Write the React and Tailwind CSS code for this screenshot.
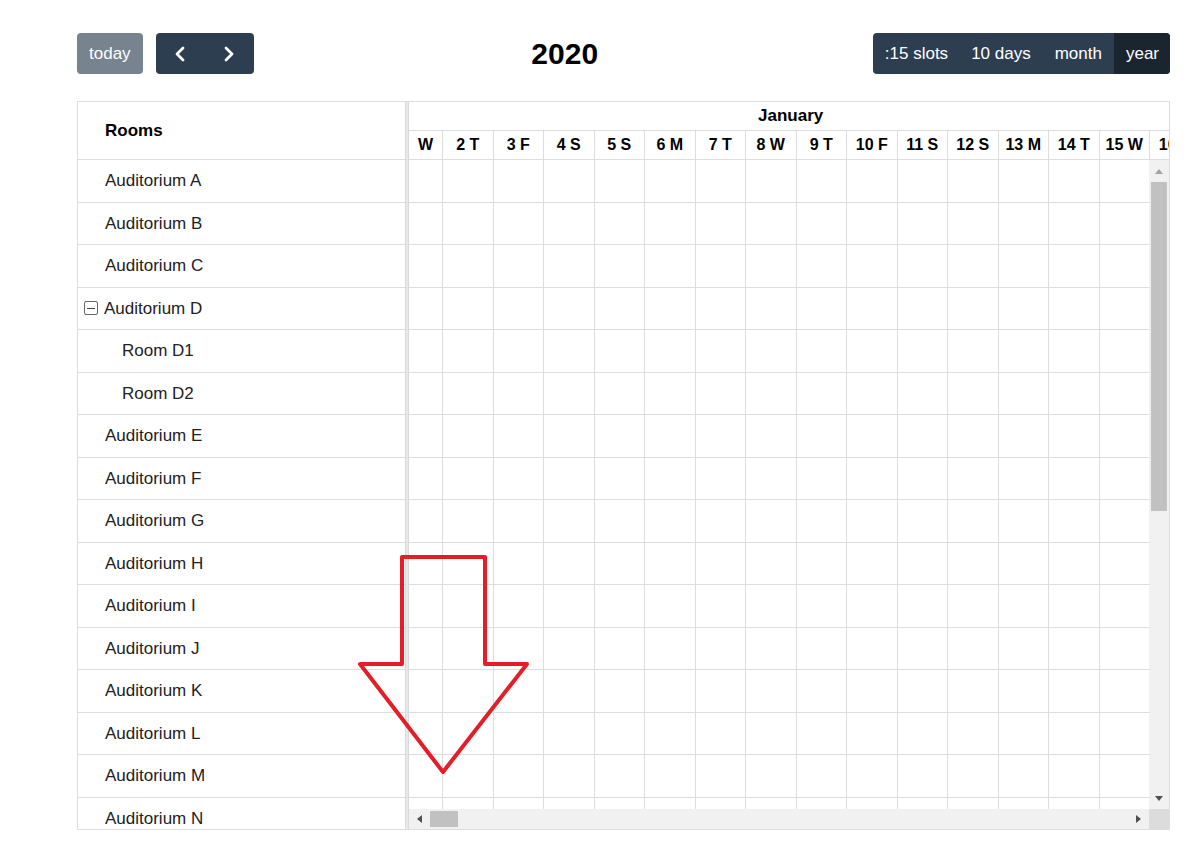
import { ChevronLeft, ChevronRight } from "lucide-react";

const rooms = [
  { name: "Auditorium A" },
  { name: "Auditorium B" },
  { name: "Auditorium C" },
  { name: "Auditorium D", toggle: true },
  { name: "Room D1", child: true },
  { name: "Room D2", child: true },
  { name: "Auditorium E" },
  { name: "Auditorium F" },
  { name: "Auditorium G" },
  { name: "Auditorium H" },
  { name: "Auditorium I" },
  { name: "Auditorium J" },
  { name: "Auditorium K" },
  { name: "Auditorium L" },
  { name: "Auditorium M" },
  { name: "Auditorium N" },
];

const days = ["1 W", "2 T", "3 F", "4 S", "5 S", "6 M", "7 T", "8 W", "9 T", "10 F", "11 S", "12 S", "13 M", "14 T", "15 W", "16 T", "17 F"];

function Toolbar() {
  return (
    <div className="flex items-center justify-between h-[41px]">
      <div className="flex items-center gap-[13px]">
        <button className="h-[41px] px-3 rounded bg-[#77838f] text-white text-[17px]">today</button>
        <div className="flex h-[41px] rounded bg-[#2c3e50] text-white overflow-hidden">
          <button className="w-[49px] flex items-center justify-center">
            <ChevronLeft size={24} strokeWidth={2.8} />
          </button>
          <button className="w-[49px] flex items-center justify-center">
            <ChevronRight size={24} strokeWidth={2.8} />
          </button>
        </div>
      </div>
      <h2 className="text-[30px] font-bold text-black ml-[3px]">2020</h2>
      <div className="flex h-[41px] rounded overflow-hidden text-[17px] text-white bg-[#2c3e50]">
        <button className="pl-3 pr-[11px]">:15 slots</button>
        <button className="px-3">10 days</button>
        <button className="px-3">month</button>
        <button className="pl-3 pr-[11px] bg-[#1a252f]">year</button>
      </div>
    </div>
  );
}

function ResourceColumn() {
  return (
    <div className="w-[327px] shrink-0 flex flex-col overflow-hidden">
      <div className="h-[58px] shrink-0 border-b border-[#ddd] flex items-center pl-[27px] text-[17px] font-bold text-black">Rooms</div>
      {rooms.map((r) => (
        <div key={r.name} className="h-[42.5px] shrink-0 border-b border-[#ddd] flex items-center text-[17px] text-[#222]">
          {r.toggle ? (
            <div className="flex items-center pl-[6px] gap-[6px]">
              <span className="w-[14px] h-[14px] border border-[#666] rounded-[2px] flex items-center justify-center">
                <span className="w-[8px] h-[1px] bg-[#444]" />
              </span>
              <span>{r.name}</span>
            </div>
          ) : (
            <span className={r.child ? "pl-[44px]" : "pl-[27px]"}>{r.name}</span>
          )}
        </div>
      ))}
    </div>
  );
}

function Timeline() {
  return (
    <div className="flex-1 flex flex-col overflow-hidden">
      {/* header */}
      <div className="shrink-0 overflow-hidden">
        <div className="h-[29px] border-b border-[#ddd] flex items-center pl-[349px] text-[17px] font-bold text-black">January</div>
        <div className="h-[29px] border-b border-[#ddd] flex ml-[-16.5px]">
          {days.map((d, i) => (
            <div
              key={d}
              className={
                i === 0
                  ? "w-[50.5px] shrink-0 border-r border-[#ddd] flex items-center justify-end pr-[9px] text-[16px] font-bold text-black whitespace-nowrap"
                  : "w-[50.5px] shrink-0 border-r border-[#ddd] flex items-center justify-center text-[16px] font-bold text-black whitespace-nowrap"
              }
            >
              {i === 0 ? "W" : d}
            </div>
          ))}
        </div>
      </div>

      {/* body */}
      <div className="flex-1 flex flex-col overflow-hidden">
        <div className="flex-1 flex overflow-hidden">
          <div className="flex-1 overflow-hidden">
            <div className="ml-[-16.5px]">
              {rooms.map((r) => (
                <div key={r.name} className="h-[42.5px] flex border-b border-[#ddd]">
                  {days.map((d) => (
                    <div key={d} className="w-[50.5px] shrink-0 border-r border-[#ddd]" />
                  ))}
                </div>
              ))}
            </div>
          </div>
          {/* vertical scrollbar */}
          <div className="w-[20px] shrink-0 bg-[#f1f1f1] flex flex-col items-center">
            <div className="h-[22px] w-full flex items-center justify-center">
              <svg width="8" height="5" viewBox="0 0 8 5"><polygon points="0,5 8,5 4,0" fill="#a3a3a3" /></svg>
            </div>
            <div className="w-[16px] h-[329px] bg-[#c1c1c1]" />
            <div className="flex-1" />
            <div className="h-[22px] w-full flex items-center justify-center">
              <svg width="8" height="5" viewBox="0 0 8 5"><polygon points="0,0 8,0 4,5" fill="#505050" /></svg>
            </div>
          </div>
        </div>
        {/* horizontal scrollbar */}
        <div className="h-[20px] shrink-0 flex">
          <div className="flex-1 bg-[#f1f1f1] flex items-center">
            <div className="w-[21px] h-full flex items-center justify-center">
              <svg width="5" height="8" viewBox="0 0 5 8"><polygon points="5,0 5,8 0,4" fill="#505050" /></svg>
            </div>
            <div className="w-[28px] h-[16px] bg-[#c1c1c1]" />
            <div className="flex-1" />
            <div className="w-[22px] h-full flex items-center justify-center">
              <svg width="5" height="8" viewBox="0 0 5 8"><polygon points="0,0 0,8 5,4" fill="#505050" /></svg>
            </div>
          </div>
          <div className="w-[20px] bg-[#dcdcdc]" />
        </div>
      </div>
    </div>
  );
}

export default function App() {
  return (
    <div className="relative w-[1200px] h-[848px] bg-white pl-[77px] pr-[30px] pt-[33px] font-['Liberation_Sans',Arial,sans-serif]">
      <Toolbar />
      <div className="mt-[27px] h-[729px] border border-[#ddd] flex overflow-hidden">
        <ResourceColumn />
        <div className="w-[4px] shrink-0 bg-[#e8e8e8] border-x border-[#d9d9d9]" />
        <Timeline />
      </div>

      {/* red arrow annotation */}
      <svg className="absolute left-[355px] top-[552px]" width="180" height="225" viewBox="0 0 180 225">
        <polygon points="47,5 130,5 130,112 172,112 88,220 5,112 47,112" fill="none" stroke="#e31e28" strokeWidth="4" strokeLinejoin="round" />
      </svg>
    </div>
  );
}
